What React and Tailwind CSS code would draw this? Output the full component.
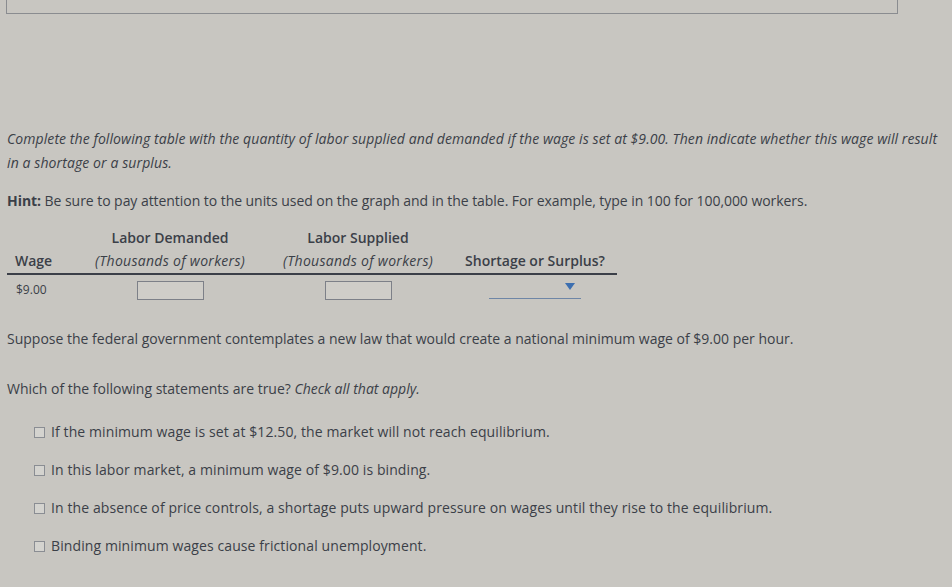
import React from 'react';

const options = [
  'If the minimum wage is set at $12.50, the market will not reach equilibrium.',
  'In this labor market, a minimum wage of $9.00 is binding.',
  'In the absence of price controls, a shortage puts upward pressure on wages until they rise to the equilibrium.',
  'Binding minimum wages cause frictional unemployment.',
];

export default function App() {
  return (
    <div
      className="w-[952px] h-[587px] overflow-hidden bg-[#c8c6c1] text-[#3b3f48] text-[14px]"
      style={{ fontFamily: '"Open Sans", "DejaVu Sans", sans-serif' }}
    >
      <div className="ml-[6px] w-[892px] h-[14px] border-x border-b border-[#8a8c90]" />

      <div className="pl-[7px] pt-[113px] pr-0">
        <p className="italic leading-[24px] whitespace-nowrap tracking-[0.08px]">
          Complete the following table with the quantity of labor supplied and demanded if the wage is set at $9.00. Then indicate whether this wage will result
        </p>
        <p className="italic leading-[24px] tracking-[0.1px]">in a shortage or a surplus.</p>

        <p className="mt-[16px] leading-[20px] whitespace-nowrap tracking-[-0.05px]">
          <span className="font-bold">Hint:</span> Be sure to pay attention to the units used on the graph and in the table. For example, type in 100 for 100,000 workers.
        </p>

        <div className="mt-[15px] w-[610px]">
          <div className="flex items-end border-b-2 border-[#3b3f48] pb-[1px] leading-[23px]">
            <div className="w-[70px] pl-[8px] font-semibold text-[14px]">Wage</div>
            <div className="w-[186px] text-center">
              <div className="font-semibold">Labor Demanded</div>
              <div className="italic tracking-[0.3px]">(Thousands of workers)</div>
            </div>
            <div className="w-[190px] text-center">
              <div className="font-semibold">Labor Supplied</div>
              <div className="italic tracking-[0.3px]">(Thousands of workers)</div>
            </div>
            <div className="w-[164px] text-center font-semibold">Shortage or Surplus?</div>
          </div>
          <div className="flex items-center h-[30px]">
            <div className="w-[70px] pl-[9px] text-[12px]">$9.00</div>
            <div className="w-[186px] flex justify-center">
              <div className="w-[67px] h-[19px] border border-[#7d8088] bg-[#cfcdc8]" />
            </div>
            <div className="w-[190px] flex justify-center">
              <div className="w-[67px] h-[19px] border border-[#7d8088] bg-[#cfcdc8]" />
            </div>
            <div className="w-[164px] flex justify-center">
              <div className="w-[92px] h-[18px] border-b border-[#6f86a6] flex justify-end items-start pr-[6px] pt-[2px]">
                <svg width="10" height="7" viewBox="0 0 10 7">
                  <path d="M0 0 L10 0 L5 7 Z" fill="#3d6fb0" />
                </svg>
              </div>
            </div>
          </div>
        </div>

        <p className="mt-[24px] leading-[20px] whitespace-nowrap tracking-[0px]">
          Suppose the federal government contemplates a new law that would create a national minimum wage of $9.00 per hour.
        </p>

        <p className="mt-[30px] leading-[20px] whitespace-nowrap tracking-[0px]">
          Which of the following statements are true? <span className="italic">Check all that apply.</span>
        </p>

        <div className="mt-[23px] pl-[27px] flex flex-col gap-[18px]">
          {options.map((o) => (
            <label key={o} className="flex items-center gap-[6px] leading-[20px] whitespace-nowrap tracking-[0.1px]">
              <span className="w-[11px] h-[11px] border border-[#8a8d93] bg-[#d4d3cf]" />
              <span>{o}</span>
            </label>
          ))}
        </div>
      </div>
    </div>
  );
}
